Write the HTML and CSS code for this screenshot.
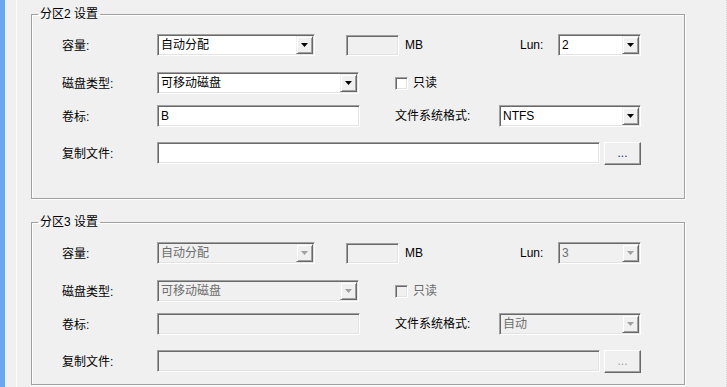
FILE: index.html
```html
<!DOCTYPE html>
<html>
<head>
<meta charset="utf-8">
<link rel="stylesheet" href="styles.css">
</head>
<body>
<div class="window">
  <div class="edge-blue"></div>
  <div class="edge-pad"></div>
  <div class="edge-line"></div>
  <main class="panel">
    <fieldset class="group g1">
      <legend>分区2 设置</legend>
      <div class="rows">
        <div class="row r1">
          <span class="label">容量:</span>
          <div class="combo w-cap"><span class="val">自动分配</span><span class="drop"><svg width="7" height="4" viewBox="0 0 7 4"><polygon points="0,0 7,0 3.5,4"/></svg></span></div>
          <div class="edit w-mb off"></div>
          <span class="unit">MB</span>
          <span class="lun">Lun:</span>
          <div class="combo w-lun"><span class="val">2</span><span class="drop"><svg width="7" height="4" viewBox="0 0 7 4"><polygon points="0,0 7,0 3.5,4"/></svg></span></div>
        </div>
        <div class="row r2">
          <span class="label">磁盘类型:</span>
          <div class="combo w-type"><span class="val">可移动磁盘</span><span class="drop"><svg width="7" height="4" viewBox="0 0 7 4"><polygon points="0,0 7,0 3.5,4"/></svg></span></div>
          <span class="check"></span>
          <span class="check-label">只读</span>
        </div>
        <div class="row r3">
          <span class="label">卷标:</span>
          <div class="edit w-vol"><span class="val">B</span></div>
          <span class="fs-label">文件系统格式:</span>
          <div class="combo w-fs"><span class="val">NTFS</span><span class="drop"><svg width="7" height="4" viewBox="0 0 7 4"><polygon points="0,0 7,0 3.5,4"/></svg></span></div>
        </div>
        <div class="row r4">
          <span class="label">复制文件:</span>
          <div class="edit w-file"></div>
          <span class="btn">...</span>
        </div>
      </div>
    </fieldset>

    <fieldset class="group g2 disabled">
      <legend>分区3 设置</legend>
      <div class="rows">
        <div class="row r1">
          <span class="label">容量:</span>
          <div class="combo w-cap"><span class="val">自动分配</span><span class="drop"><svg width="7" height="4" viewBox="0 0 7 4"><polygon points="0,0 7,0 3.5,4"/></svg></span></div>
          <div class="edit w-mb off"></div>
          <span class="unit">MB</span>
          <span class="lun">Lun:</span>
          <div class="combo w-lun"><span class="val">3</span><span class="drop"><svg width="7" height="4" viewBox="0 0 7 4"><polygon points="0,0 7,0 3.5,4"/></svg></span></div>
        </div>
        <div class="row r2">
          <span class="label">磁盘类型:</span>
          <div class="combo w-type"><span class="val">可移动磁盘</span><span class="drop"><svg width="7" height="4" viewBox="0 0 7 4"><polygon points="0,0 7,0 3.5,4"/></svg></span></div>
          <span class="check"></span>
          <span class="check-label">只读</span>
        </div>
        <div class="row r3">
          <span class="label">卷标:</span>
          <div class="edit w-vol"></div>
          <span class="fs-label">文件系统格式:</span>
          <div class="combo w-fs"><span class="val">自动</span><span class="drop"><svg width="7" height="4" viewBox="0 0 7 4"><polygon points="0,0 7,0 3.5,4"/></svg></span></div>
        </div>
        <div class="row r4">
          <span class="label">复制文件:</span>
          <div class="edit w-file"></div>
          <span class="btn">...</span>
        </div>
      </div>
    </fieldset>
  </main>
</div>
</body>
</html>
```

FILE: styles.css
```css
html, body {
  margin: 0;
  padding: 0;
  background: #f0f0f0;
}

body {
  font-family: "Liberation Sans", "Noto Sans CJK SC", sans-serif;
  font-size: 12px;
  color: #000;
}

.window {
  display: flex;
  width: 727px;
  height: 387px;
  overflow: hidden;
  box-sizing: border-box;
  border-right: 1px dotted #d4d4d4;
}

.edge-blue {
  width: 5px;
  flex: none;
  background: #68a6f2;
}

.edge-pad {
  width: 11px;
  flex: none;
  background: #f0f0f0;
}

.edge-line {
  width: 1px;
  flex: none;
  background: #fbfbfb;
}

.panel {
  flex: 1;
  padding-left: 14px;
  padding-top: 6px;
}

.group {
  width: 654px;
  box-sizing: border-box;
  margin: 0;
  padding: 0;
  border: 1px solid #a0a0a0;
  box-shadow: 1px 1px 0 #fff, inset 1px 1px 0 #fff;
  min-width: 0;
}

.g2 {
  margin-top: 15px;
}

.group legend {
  margin-left: 6px;
  padding: 0 2px;
  line-height: 16px;
  height: 16px;
  font-size: 12px;
}

.rows {
  display: flex;
  flex-direction: column;
  padding-left: 30px;
  padding-bottom: 34px;
}

.g2 .rows {
  padding-bottom: 12px;
}

.row {
  display: flex;
  align-items: center;
  height: 22px;
}

.r1 { margin-top: 12px; }
.r2 { margin-top: 16px; }
.r3 { margin-top: 11px; }
.r4 { margin-top: 15px; }

.label {
  width: 95px;
  flex: none;
  line-height: 16px;
  padding-top: 2px;
}

.combo, .edit {
  box-sizing: border-box;
  height: 22px;
  flex: none;
  display: flex;
  align-items: center;
  background: #fff;
  border: 1px solid;
  border-color: #a0a0a0 #fff #fff #a0a0a0;
  box-shadow: inset 1px 1px 0 #696969, inset -1px -1px 0 #e3e3e3;
}

.edit.off {
  background: #f0f0f0;
}

.val {
  padding-left: 3px;
  line-height: 16px;
  flex: 1;
  white-space: nowrap;
}

.drop {
  box-sizing: border-box;
  width: 17px;
  height: 18px;
  margin-right: 1px;
  flex: none;
  display: flex;
  align-items: center;
  justify-content: center;
  background: #f0f0f0;
  border: 1px solid;
  border-color: #f0f0f0 #696969 #696969 #f0f0f0;
  box-shadow: inset 1px 1px 0 #fff, inset -1px -1px 0 #a0a0a0;
}

.drop svg {
  display: block;
  fill: #000;
}

.w-cap { width: 158px; }
.w-mb { width: 53px; height: 21px; margin-left: 31px; }
.w-lun { width: 83px; }
.w-type { width: 202px; }
.w-vol { width: 203px; }
.w-fs { width: 142px; }
.w-file { width: 443px; }

.unit {
  width: 115px;
  flex: none;
  margin-left: 6px;
  line-height: 16px;
}

.lun {
  width: 38px;
  flex: none;
  line-height: 16px;
}

.check {
  box-sizing: border-box;
  width: 13px;
  height: 13px;
  flex: none;
  margin-left: 36px;
  background: #fff;
  border: 1px solid;
  border-color: #a0a0a0 #fff #fff #a0a0a0;
  box-shadow: inset 1px 1px 0 #696969, inset -1px -1px 0 #e3e3e3;
}

.check-label {
  margin-left: 5px;
  line-height: 16px;
}

.fs-label {
  width: 104px;
  flex: none;
  margin-left: 35px;
  line-height: 16px;
}

.btn {
  box-sizing: border-box;
  width: 37px;
  height: 23px;
  flex: none;
  margin-left: 4px;
  display: flex;
  align-items: center;
  justify-content: center;
  background: #f0f0f0;
  border: 1px solid;
  border-color: #fff #696969 #696969 #fff;
  box-shadow: inset -1px -1px 0 #a0a0a0;
  color: #1c2c6c;
  line-height: 12px;
  padding-bottom: 1px;
}

/* disabled group */
.disabled .combo,
.disabled .edit,
.disabled .check {
  background: #f0f0f0;
}

.disabled .val,
.disabled .check-label {
  color: #6d6d6d;
}

.disabled .drop svg {
  fill: #a0a0a0;
}

.disabled .btn {
  color: #a0a0a0;
}
```
